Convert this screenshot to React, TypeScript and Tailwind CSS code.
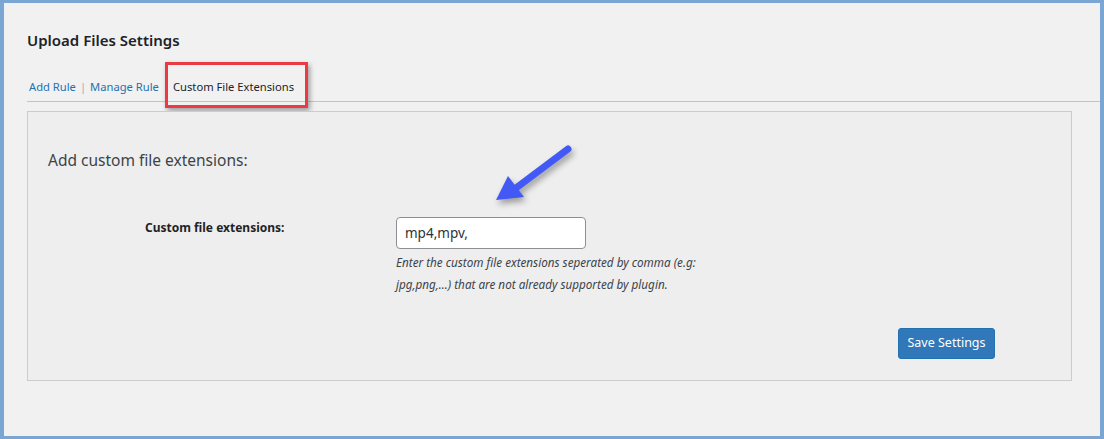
export default function App() {
  return (
    <div
      className="h-[439px] w-[1104px] overflow-hidden border-x-4 border-y-[3px] border-[#7ba6d4] bg-[#f1f1f1] text-[#1d2327]"
      style={{ fontFamily: '"Noto Sans", "Open Sans", sans-serif' }}
    >
      <div className="pl-[23px] pt-[26px]">
        <h2 className="text-[15px] font-semibold leading-[22px] text-[#1d2327]">
          Upload Files Settings
        </h2>

        {/* tabs */}
        <div className="relative mt-[24px] border-b border-[#c3c4c7] pb-[2px]">
          <ul className="ml-[2px] flex items-center text-[11.2px] leading-[24px]">
            <li className="text-[#2271b1]">Add Rule</li>
            <li className="px-[4px] text-[#a7aaad]">|</li>
            <li className="text-[#2271b1]">Manage Rule</li>
            <li className="px-[4px] text-[#a7aaad]">|</li>
            <li className="text-[#1d2327]">Custom File Extensions</li>
          </ul>
          <div className="pointer-events-none absolute left-[138px] top-[-13px] h-[46px] w-[143px] border-[3px] border-[#ec3a44] shadow-[2px_3px_5px_rgba(0,0,0,0.35)]" />
        </div>

        {/* panel */}
        <div className="relative mr-[28px] mt-[9px] h-[270px] border border-[#cccccc] bg-[#eeeeee] pl-[20px] pt-[36px]">
          <h3 className="text-[15.5px] font-normal leading-[24px] text-[#3c434a]">
            Add custom file extensions:
          </h3>

          <div className="mt-[45px] flex">
            <div className="w-[348px] pl-[97px] pt-[1px] text-[12px] font-bold leading-[20px] text-[#1d2327]">
              Custom file extensions:
            </div>
            <div>
              <input
                type="text"
                defaultValue="mp4,mpv,"
                className="h-[32px] w-[190px] rounded-[4px] border border-[#8c8f94] bg-white px-[8px] text-[13.5px] text-[#2c3338] outline-none"
              />
              <p className="mt-[2px] w-[330px] text-[11.7px] italic leading-[22px] text-[#3c434a]">
                Enter the custom file extensions seperated by comma (e.g:
                <br />
                jpg,png,...) that are not already supported by plugin.
              </p>
            </div>
          </div>

          <div className="mt-[33px] flex justify-end pr-[76px]">
            <button
              type="button"
              className="h-[31px] w-[97px] rounded-[3px] border border-[#2271b1] bg-[#3078b9] text-[12.5px] text-white"
            >
              Save Settings
            </button>
          </div>

          <svg
            className="pointer-events-none absolute left-[460px] top-[24px] drop-shadow-[2px_4px_3px_rgba(0,0,0,0.35)]"
            width="120"
            height="90"
            viewBox="0 0 120 90"
          >
            <line x1="80" y1="13" x2="28" y2="52" stroke="#4259f5" strokeWidth="7" strokeLinecap="round" />
            <polygon points="8,64 20,40 36,61" fill="#4259f5" />
          </svg>
        </div>
      </div>
    </div>
  );
}
